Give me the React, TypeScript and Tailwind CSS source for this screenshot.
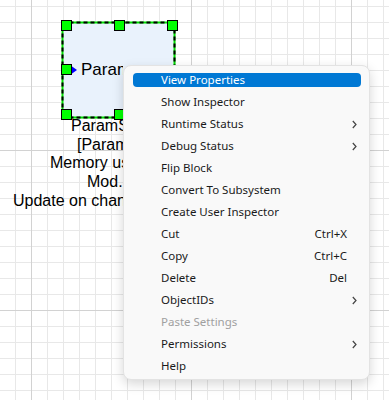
import React from 'react';

type MenuItem = {
  label: string;
  shortcut?: string;
  submenu?: boolean;
  disabled?: boolean;
  active?: boolean;
};

const menuItems: MenuItem[] = [
  { label: 'View Properties', active: true },
  { label: 'Show Inspector' },
  { label: 'Runtime Status', submenu: true },
  { label: 'Debug Status', submenu: true },
  { label: 'Flip Block' },
  { label: 'Convert To Subsystem' },
  { label: 'Create User Inspector' },
  { label: 'Cut', shortcut: 'Ctrl+X' },
  { label: 'Copy', shortcut: 'Ctrl+C' },
  { label: 'Delete', shortcut: 'Del' },
  { label: 'ObjectIDs', submenu: true },
  { label: 'Paste Settings', disabled: true },
  { label: 'Permissions', submenu: true },
  { label: 'Help' },
];

// label lines under the block (the menu hides their right half)
const labelLines = [
  { text: 'ParamSet', left: 'ml-[71px]' },
  { text: '[ParamSet1]', left: 'ml-[77px]' },
  { text: 'Memory usage: 0 bytes', left: 'ml-[50px]' },
  { text: 'Mod...', left: 'ml-[87px]' },
  { text: 'Update on change: enabled', left: 'ml-[13px]' },
];

function Handle({ pos }: { pos: string }) {
  return <div className={`absolute w-[11px] h-[11px] bg-[#00ff00] border border-black ${pos}`} />;
}

function Chevron() {
  return (
    <svg width="5" height="9" viewBox="0 0 5 9" className="block">
      <path d="M0.8 1 L4 4.5 L0.8 8" fill="none" stroke="#444" strokeWidth="1.2" />
    </svg>
  );
}

function ContextMenu() {
  return (
    <div className="absolute left-[123px] top-[65px] w-[247px] pt-[3px] pb-[2px] bg-[#f9f9f9] border border-[#e3e3e3] rounded-[8px] shadow-[0_4px_12px_rgba(0,0,0,0.16)] font-['Noto_Sans',sans-serif] text-[11.5px] flex flex-col">
      {menuItems.map(item => (
        <div key={item.label} className="h-[22px] pl-[9px] pr-[8px] py-[4px]">
          <div
            className={`h-[14px] rounded-[4px] flex items-center justify-between pl-[28px] pr-[4px] leading-[14px] ${
              item.active ? 'bg-[#0078d4] text-white' : item.disabled ? 'text-[#a0a0a0]' : 'text-[#1a1a1a]'
            }`}
          >
            <span>{item.label}</span>
            {item.shortcut && <span className="mr-[10px]">{item.shortcut}</span>}
            {item.submenu && <Chevron />}
          </div>
        </div>
      ))}
    </div>
  );
}

export default function App() {
  return (
    <div className="relative w-[389px] h-[400px] overflow-hidden bg-white [background-image:linear-gradient(to_right,#d2d2d2_1px,transparent_1px),linear-gradient(to_bottom,#d2d2d2_1px,transparent_1px),linear-gradient(to_right,#e8e8e8_1px,transparent_1px),linear-gradient(to_bottom,#e8e8e8_1px,transparent_1px)] [background-size:160px_160px,160px_160px,16px_16px,16px_16px] [background-position:31px_0,0_150px,15px_0,0_6px]">
      {/* Block */}
      <div className="absolute left-[61px] top-[21px] w-[115px] h-[98px] font-['Liberation_Sans',Arial,sans-serif]">
        <div className="absolute inset-[2px] bg-[#e9f2fc]" />
        <svg width="115" height="98" className="absolute left-0 top-0">
          <rect x="1.5" y="1.5" width="112" height="95" fill="none" stroke="#00e000" strokeWidth="2" />
          <rect x="1.5" y="1.5" width="112" height="95" fill="none" stroke="#000" strokeWidth="2" strokeDasharray="4 3" />
        </svg>
        <div className="absolute left-[20px] top-[39px] w-[42px] overflow-hidden text-[17px] leading-[20px] text-black whitespace-nowrap">ParamSet</div>
      </div>

      {/* input port */}
      <svg width="8" height="10" className="absolute left-[70px] top-[65px]">
        <path d="M0 0 L7 5 L0 10 Z" fill="#0000ff" />
      </svg>

      <Handle pos="left-[61px] top-[20px]" />
      <Handle pos="left-[114px] top-[20px]" />
      <Handle pos="left-[167px] top-[20px]" />
      <Handle pos="left-[61px] top-[64px]" />
      <Handle pos="left-[61px] top-[109px]" />
      <Handle pos="left-[114px] top-[109px]" />
      <Handle pos="left-[167px] top-[109px]" />

      {/* Labels */}
      <div className="absolute left-0 top-[117px] w-[123px] overflow-hidden flex flex-col items-start font-['Liberation_Sans',Arial,sans-serif] text-[16px] leading-[18.7px] text-black whitespace-nowrap">
        {labelLines.map(line => (
          <div key={line.text} className={line.left}>{line.text}</div>
        ))}
      </div>

      <ContextMenu />
    </div>
  );
}
